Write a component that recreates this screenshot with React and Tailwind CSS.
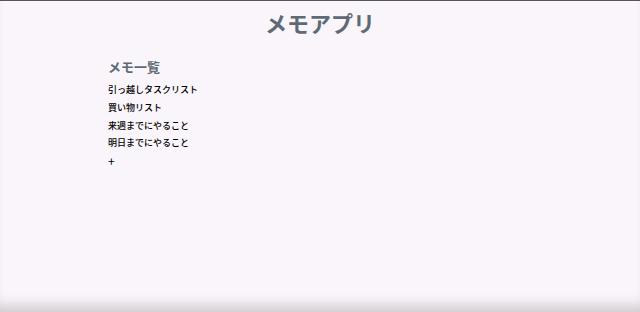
import React from "react"

const memos = ["引っ越しタスクリスト", "買い物リスト", "来週までにやること", "明日までにやること"]

const App = () => {
    return (
        <div
            className="h-[312px] w-[640px] overflow-hidden border-t border-[#555555] bg-[#faf5fa] shadow-[inset_0_-14px_14px_-8px_rgba(0,0,0,0.18)]"
            style={{ fontFamily: '"Noto Sans CJK JP", "Noto Sans", sans-serif' }}
        >
            <h1 className="mt-[3px] text-center text-[22px] font-bold leading-[36px] text-[#5e6a76]">メモアプリ</h1>
            <div className="ml-[108px] mt-[17px]">
                <h2 className="text-[13px] font-bold leading-[20px] text-[#5e6a76]">メモ一覧</h2>
                <ul className="mt-[4px] text-[9px] font-medium leading-[17.8px] text-black">
                    {memos.map((memo) => (
                        <li key={memo}>{memo}</li>
                    ))}
                    <li className="text-[12px] font-normal">+</li>
                </ul>
            </div>
        </div>
    )
}

export default App
